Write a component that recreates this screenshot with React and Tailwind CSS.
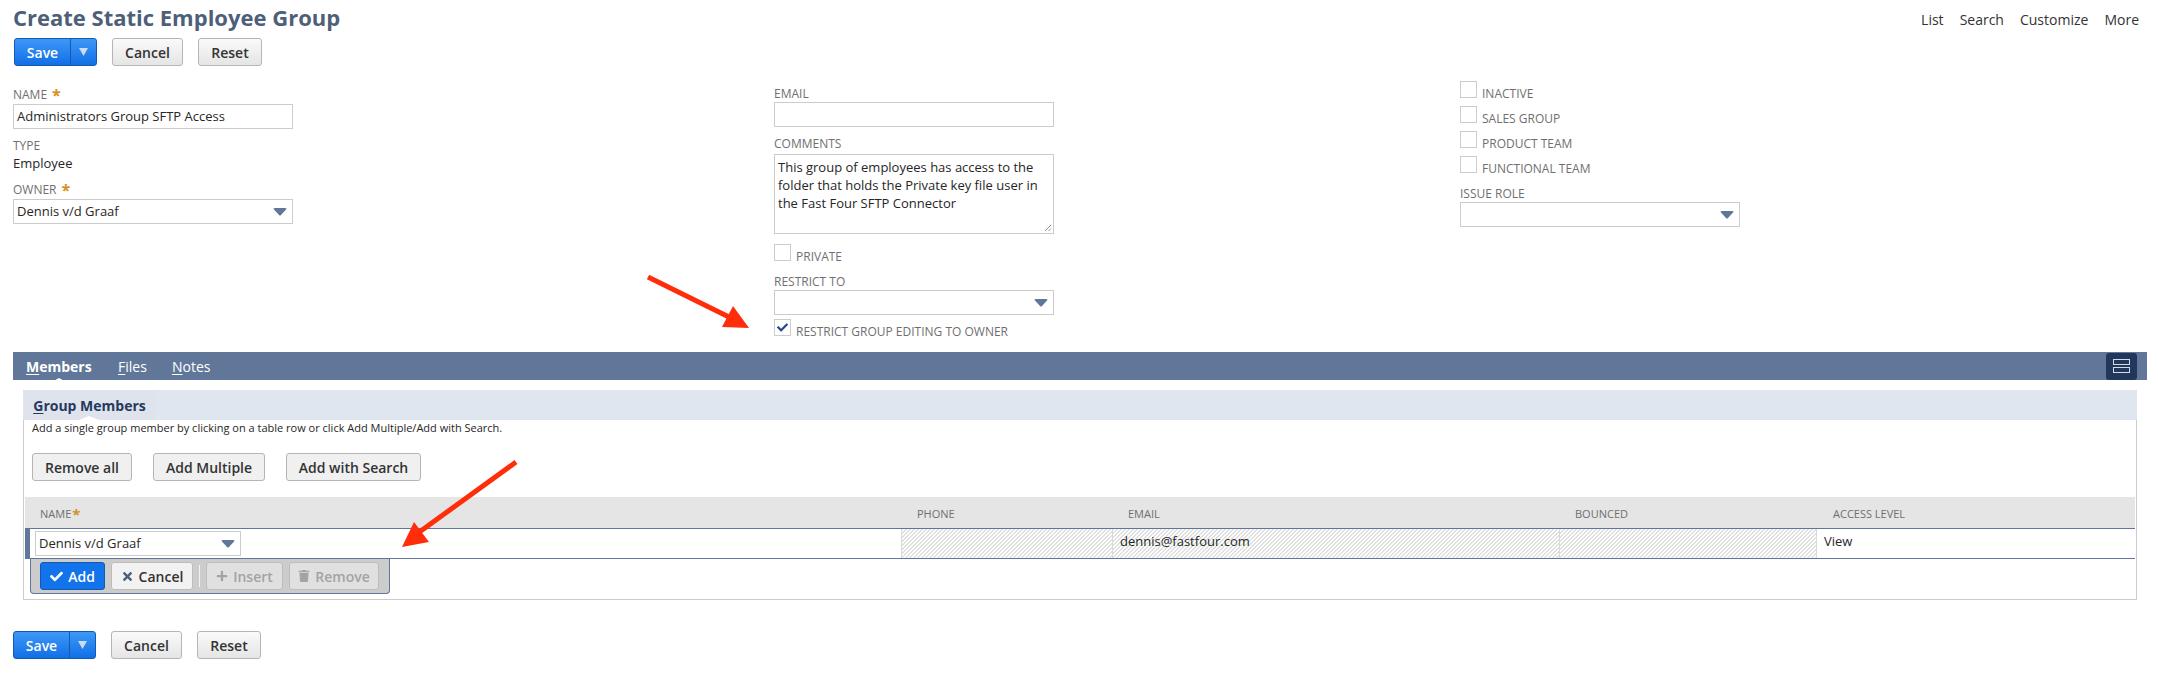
import { FaCheck, FaTimes, FaPlus, FaTrash } from "react-icons/fa";

function Caret({ className = "" }) {
  return (
    <svg className={className} width="14" height="8" viewBox="0 0 14 8" aria-hidden>
      <path d="M0.5 1 Q0.5 0 2 0 H12 Q13.5 0 13.5 1 L8 7 Q7 8 6 7 Z" fill="#607799" />
    </svg>
  );
}

function Label({ children, required, className = "" }) {
  return (
    <div className={`flex h-[13px] items-center text-[12px] leading-none text-[#6f6f6f] uppercase ${className}`}>
      {children}
      {required ? <span className="ml-[5px] text-[16px] font-bold text-[#d5901c]">*</span> : null}
    </div>
  );
}

function TextBox({ children, className = "" }) {
  return (
    <div className={`flex h-[25px] w-[280px] items-center border border-[#cccccc] bg-white px-[3px] text-[13px] text-[#262626] ${className}`}>
      {children}
    </div>
  );
}

function Select({ children, className = "w-[280px]" }) {
  return (
    <div className={`flex h-[25px] items-center justify-between border border-[#cccccc] bg-white pr-[5px] pl-[3px] text-[13px] text-[#262626] ${className}`}>
      <span>{children}</span>
      <Caret />
    </div>
  );
}

function CheckRow({ label, checked, className = "" }) {
  return (
    <div className={`flex h-[17px] items-start ${className}`}>
      <div className="flex h-[17px] w-[17px] shrink-0 items-center justify-center border border-[#cccccc] bg-white">
        {checked ? <FaCheck size={11} className="text-[#24488f]" /> : null}
      </div>
      <span className="mt-[6px] ml-[5px] text-[12px] leading-[14px] text-[#6f6f6f] uppercase">{label}</span>
    </div>
  );
}

function GreyButton({ children, className = "" }) {
  return (
    <div className={`flex h-[28px] items-center justify-center rounded-[3px] border border-[#b5b5b5] bg-gradient-to-b from-[#fafafa] to-[#e5e5e5] text-[14px] font-semibold text-[#333333] ${className}`}>
      {children}
    </div>
  );
}

function ActionButtons({ className = "" }) {
  return (
    <div className={`flex h-[28px] items-center ${className}`}>
      <div className="flex h-[28px] w-[83px] overflow-hidden rounded-[3px] border border-[#125ab2] bg-gradient-to-b from-[#3d98f7] to-[#0f6fe6] text-[14px] font-semibold text-white">
        <span className="flex w-[56px] items-center justify-center border-r border-[#125ab2]">Save</span>
        <span className="flex flex-1 items-center justify-center">
          <svg width="9" height="8" viewBox="0 0 9 8" aria-hidden>
            <path d="M0 0 H9 L4.5 8 Z" fill="#c9dcf2" />
          </svg>
        </span>
      </div>
      <GreyButton className="ml-[15px] w-[71px]">Cancel</GreyButton>
      <GreyButton className="ml-[15px] w-[64px]">Reset</GreyButton>
    </div>
  );
}

function TitleLink({ children }) {
  return <span className="text-[14px] text-[#333333]">{children}</span>;
}

function ColumnHead({ children, required, className = "" }) {
  return (
    <div className={`flex items-center text-[11px] text-[#6f6f6f] uppercase ${className}`}>
      {children}
      {required ? <span className="ml-[1px] text-[15px] font-bold text-[#d5901c]">*</span> : null}
    </div>
  );
}

const hatch =
  "bg-[repeating-linear-gradient(135deg,#e0e0e0_0,#e0e0e0_1.414px,#ffffff_1.414px,#ffffff_2.828px)]";

export default function App() {
  return (
    <div className="relative h-[674px] w-[2158px] overflow-hidden bg-white font-['Open_Sans',sans-serif]">
      {/* header */}
      <div className="flex h-[38px] items-start justify-between pr-[19px] pl-[13px]">
        <h1 className="mt-[1px] text-[22px] leading-[32px] font-bold text-[#4d5f79]">Create Static Employee Group</h1>
        <div className="mt-[11px] flex gap-[16px] leading-[18px]">
          <TitleLink>List</TitleLink>
          <TitleLink>Search</TitleLink>
          <TitleLink>Customize</TitleLink>
          <TitleLink>More</TitleLink>
        </div>
      </div>
      <ActionButtons className="pl-[14px]" />

      {/* main fields */}
      <div className="flex h-[286px]">
        <div className="w-[774px] pl-[13px]">
          <Label required className="mt-[22px]">Name</Label>
          <TextBox className="mt-[3px]">Administrators Group SFTP Access</TextBox>
          <Label className="mt-[10px]">Type</Label>
          <div className="mt-[2px] text-[13px] leading-[18px] text-[#262626]">Employee</div>
          <Label required className="mt-[11px]">Owner</Label>
          <Select className="mt-[3px] w-[280px]">Dennis v/d Graaf</Select>
        </div>
        <div className="w-[686px]">
          <Label className="mt-[21px]">Email</Label>
          <TextBox className="mt-[2px]" />
          <Label className="mt-[10px]">Comments</Label>
          <div className="relative mt-[4px] h-[80px] w-[280px] border border-[#cccccc] bg-white px-[3px] pt-[3px] text-[13px] leading-[18px] text-[#262626]">
            This group of employees has access to the folder that holds the Private key file user in the Fast Four SFTP Connector
            <svg className="absolute right-[1px] bottom-[1px]" width="8" height="8" viewBox="0 0 8 8" aria-hidden>
              <path d="M1 7 L7 1 M4.5 7 L7 4.5" stroke="#777777" strokeWidth="0.8" />
            </svg>
          </div>
          <CheckRow label="Private" className="mt-[10px]" />
          <Label className="mt-[14px]">Restrict To</Label>
          <Select className="mt-[2px] w-[280px]" />
          <CheckRow label="Restrict group editing to owner" checked className="mt-[4px]" />
        </div>
        <div>
          <CheckRow label="Inactive" className="mt-[15px]" />
          <CheckRow label="Sales Group" className="mt-[8px]" />
          <CheckRow label="Product Team" className="mt-[8px]" />
          <CheckRow label="Functional Team" className="mt-[8px]" />
          <Label className="mt-[14px]">Issue Role</Label>
          <Select className="mt-[2px] w-[280px]" />
        </div>
      </div>

      {/* tab bar */}
      <div className="mx-[13px] flex h-[28px] w-[2134px] items-center justify-between bg-[#607799] pr-[10px] pl-[13px]">
        <div className="flex h-full items-center text-[14px] text-white">
          <span className="relative w-[92px] font-bold">
            <span className="underline underline-offset-2">M</span>embers
            <span className="absolute top-[22px] left-[24px] h-0 w-0 border-x-[9px] border-b-[5px] border-x-transparent border-b-white" />
          </span>
          <span className="w-[54px]"><span className="underline underline-offset-2">F</span>iles</span>
          <span><span className="underline underline-offset-2">N</span>otes</span>
        </div>
        <div className="flex h-[27px] w-[31px] flex-col items-center justify-center gap-[2px] rounded-[3px] bg-[#22375c]">
          <span className="h-[6px] w-[17px] border border-[#d5dbe5]" />
          <span className="h-[6px] w-[17px] border border-[#d5dbe5]" />
        </div>
      </div>

      {/* group members panel */}
      <div className="mt-[10px] ml-[23px] w-[2114px]">
        <div className="flex h-[30px] bg-[#dfe6ef]">
          <div className="relative flex w-[133px] items-center justify-center bg-[#dfe3eb] text-[14px] font-bold text-[#24395f]">
            <span><span className="underline underline-offset-2">G</span>roup Members</span>
            <span className="absolute bottom-0 left-[56px] h-0 w-0 border-x-[10px] border-b-[4px] border-x-transparent border-b-white" />
          </div>
        </div>
        <div className="h-[180px] border-x border-b border-[#cccccc] px-[1px] pb-[2px]">
          <div className="pl-[7px] text-[11px] leading-[16px] text-[#262626]">
            Add a single group member by clicking on a table row or click Add Multiple/Add with Search.
          </div>
          <div className="mt-[17px] flex gap-[21px] pl-[7px]">
            <GreyButton className="w-[100px] !bg-none !bg-[#f0f0f0]">Remove all</GreyButton>
            <GreyButton className="w-[112px] !bg-none !bg-[#f0f0f0]">Add Multiple</GreyButton>
            <GreyButton className="w-[135px] !bg-none !bg-[#f0f0f0]">Add with Search</GreyButton>
          </div>

          {/* table */}
          <div className="mt-[16px] flex h-[31px] items-center bg-[#e5e5e5] pt-[4px]">
            <ColumnHead required className="w-[876px] pl-[15px]">Name</ColumnHead>
            <ColumnHead className="w-[211px] pl-[16px]">Phone</ColumnHead>
            <ColumnHead className="w-[447px] pl-[16px]">Email</ColumnHead>
            <ColumnHead className="w-[258px] pl-[16px]">Bounced</ColumnHead>
            <ColumnHead className="pl-[16px]">Access Level</ColumnHead>
          </div>
          <div className="flex h-[31px] border-y border-[#607799] text-[13px] text-[#262626]">
            <div className="flex w-[876px] border-l-[5px] border-l-[#607799] pl-[5px] pt-[2px]">
              <Select className="w-[206px]">Dennis v/d Graaf</Select>
            </div>
            <div className={`w-[211px] border-l border-[#d9d9d9] ${hatch}`} />
            <div className={`w-[447px] border-l border-[#d9d9d9] pl-[7px] leading-[24px] ${hatch}`}>dennis@fastfour.com</div>
            <div className={`w-[257px] border-l border-[#d9d9d9] ${hatch}`} />
            <div className="flex-1 border-l border-[#d9d9d9] pl-[7px] leading-[24px]">View</div>
          </div>
          <div className="ml-[5px] flex h-[35px] w-[360px] items-center rounded-b-[4px] border-x border-b border-[#607799] bg-[#cccccc] pl-[9px] text-[14px] font-semibold">
            <div className="flex h-[28px] w-[65px] items-center justify-center gap-[5px] rounded-[3px] border border-[#125ab2] bg-[#1273ea] text-white">
              <FaCheck size={13} />Add
            </div>
            <div className="ml-[6px] flex h-[28px] w-[82px] items-center justify-center gap-[5px] rounded-[3px] border border-[#bdbdbd] bg-[#f2f2f2] text-[#333333]">
              <FaTimes size={13} className="text-[#4d5f79]" />Cancel
            </div>
            <div className="ml-[6px] h-[22px] w-[1px] bg-[#f2f2f2]" />
            <div className="ml-[6px] flex h-[28px] w-[77px] items-center justify-center gap-[5px] rounded-[3px] border border-[#bdbdbd] bg-[#e0e0e0] text-[#a3a3a3]">
              <FaPlus size={12} />Insert
            </div>
            <div className="ml-[6px] flex h-[28px] w-[90px] items-center justify-center gap-[5px] rounded-[3px] border border-[#bdbdbd] bg-[#e0e0e0] text-[#a3a3a3]">
              <FaTrash size={12} />Remove
            </div>
          </div>
        </div>
      </div>

      <ActionButtons className="mt-[31px] pl-[13px]" />

      {/* annotation arrows */}
      <svg className="absolute top-0 left-0" width="2158" height="674" aria-hidden>
        <path d="M648 277 L731 318" stroke="#ff2d0a" strokeWidth="5" />
        <path d="M733 306 L749 328 L722 327 Z" fill="#ff2d0a" />
        <path d="M516 462 L418 533" stroke="#ff2d0a" strokeWidth="5" />
        <path d="M414 522 L429 542 L402 547 Z" fill="#ff2d0a" />
      </svg>
    </div>
  );
}
